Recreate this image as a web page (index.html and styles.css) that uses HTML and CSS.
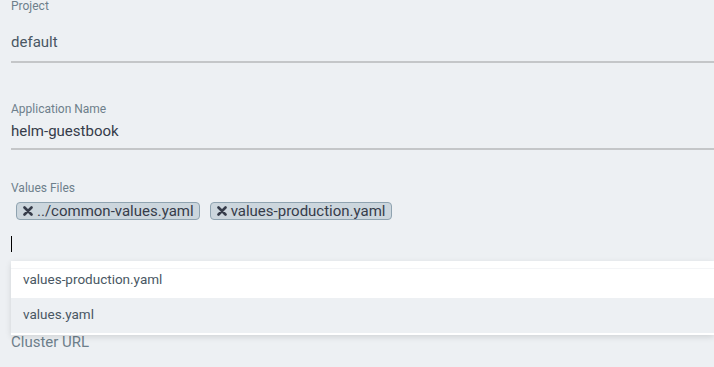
FILE: index.html
```html
<!DOCTYPE html>
<html lang="en">
<head>
    <meta charset="UTF-8">
    <meta name="viewport" content="width=device-width, initial-scale=1.0">
    <title>New App</title>
    <link rel="stylesheet" href="styles.css">
</head>
<body>
    <form class="app-form">
        <div class="field field-project">
            <label class="field-label">Project</label>
            <div class="field-value muted">default</div>
        </div>

        <div class="field field-name">
            <label class="field-label">Application Name</label>
            <div class="field-value">helm-guestbook</div>
        </div>

        <div class="field field-values">
            <label class="field-label">Values Files</label>
            <div class="tags">
                <span class="tag">
                    <svg class="tag-x" viewBox="0 0 10 10" width="10" height="10"><path d="M1.5 1.5 L8.5 8.5 M8.5 1.5 L1.5 8.5" /></svg>
                    ../common-values.yaml
                </span>
                <span class="tag">
                    <svg class="tag-x" viewBox="0 0 10 10" width="10" height="10"><path d="M1.5 1.5 L8.5 8.5 M8.5 1.5 L1.5 8.5" /></svg>
                    values-production.yaml
                </span>
            </div>
            <div class="caret"></div>

            <ul class="menu">
                <li class="menu-item">values-production.yaml</li>
                <li class="menu-item active">values.yaml</li>
            </ul>
        </div>

        <div class="field field-cluster">
            <label class="placeholder">Cluster URL</label>
        </div>
    </form>
</body>
</html>
```

FILE: styles.css
```css
/* Base */
body {
    margin: 0;
    background-color: #edf0f3;
    font-family: Roboto, 'Liberation Sans', sans-serif;
    color: #363c4a;
    overflow: hidden;
}

.app-form {
    padding-left: 11px;
}

.field {
    position: relative;
}

.field-label {
    display: block;
    font-size: 12px;
    line-height: 12px;
    color: #6d7f8b;
}

.field-value {
    font-size: 15px;
    line-height: 20px;
    border-bottom: 2px solid #c4c6c8;
}

.field-value.muted {
    color: #495763;
}

/* Project */
.field-project .field-value {
    margin-top: 20px;
    padding-bottom: 9px;
}

/* Application name */
.field-name {
    margin-top: 40px;
}

.field-name .field-value {
    margin-top: 6px;
    padding-bottom: 7px;
}

/* Values files */
.field-values {
    margin-top: 32px;
}

.tags {
    display: flex;
    gap: 10px;
    margin-top: 8px;
    padding-left: 5px;
}

.tag {
    display: inline-flex;
    align-items: center;
    gap: 4px;
    height: 16px;
    padding: 0 5px 0 6px;
    border: 1px solid #8fa3b0;
    border-radius: 4px;
    background-color: #ccd6dd;
    font-size: 15px;
    line-height: 16px;
    color: #363c4a;
}

.tag-x {
    stroke: #363c4a;
    stroke-width: 2.6;
    stroke-linecap: round;
    fill: none;
}

.caret {
    width: 1px;
    height: 16px;
    margin-top: 16px;
    background-color: #000;
}

.menu {
    position: absolute;
    top: 79px;
    left: 0;
    right: 0;
    margin: 0;
    padding: 2px 0;
    list-style: none;
    background-color: #fff;
    box-shadow: 0 2px 6px rgba(0, 0, 0, 0.12);
    z-index: 2;
}

.menu::before {
    content: "";
    position: absolute;
    top: 7px;
    left: 0;
    right: 0;
    height: 1px;
    background-color: #f4f5f7;
}

.menu-item {
    height: 33px;
    padding: 0 0 2px 12px;
    font-size: 13.5px;
    line-height: 33px;
    color: #495763;
}

.menu-item.active {
    background-color: #edf0f3;
}

/* Cluster */
.field-cluster {
    margin-top: 80px;
}

.placeholder {
    display: block;
    font-size: 15px;
    line-height: 20px;
    color: #6d7f8b;
}
```
